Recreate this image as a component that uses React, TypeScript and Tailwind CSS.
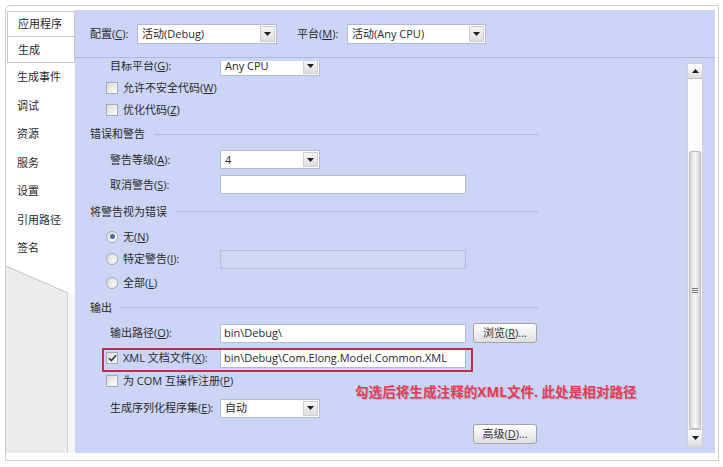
import React from "react";

function Arrow({ up }: { up?: boolean }) {
  return (
    <svg width="7" height="4" viewBox="0 0 7 4">
      <path d={up ? "M0 4 L3.5 0 L7 4Z" : "M0 0 L7 0 L3.5 4Z"} fill="#1f1f1f" />
    </svg>
  );
}

function Combo({ w, h, value }: { w: string; h: string; value: string }) {
  return (
    <div className={`flex ${w} ${h} border border-[#b3bad3] bg-white shrink-0`}>
      <div className="flex-1 flex items-center pl-[4px] whitespace-nowrap overflow-hidden">{value}</div>
      <div className="w-[15px] m-[1px] flex items-center justify-center border border-[#cfcfcf] bg-gradient-to-b from-[#f6f6f6] to-[#dedede]">
        <Arrow />
      </div>
    </div>
  );
}

function TextBox({ value, disabled }: { value?: string; disabled?: boolean }) {
  return (
    <div
      className={`w-[246px] h-[19px] shrink-0 flex items-center pl-[3px] border whitespace-nowrap ${
        disabled ? "border-[#b7bfe0] bg-[#cfd7f6]" : "border-[#b3bad3] bg-white"
      }`}
    >
      {value}
    </div>
  );
}

function Button({ children }: { children: React.ReactNode }) {
  return (
    <div className="w-[64px] h-[20px] shrink-0 flex items-center justify-center border border-[#a3a3a3] rounded-[3px] bg-gradient-to-b from-white to-[#e0e0e0] text-[#333]">
      {children}
    </div>
  );
}

function Check({ checked }: { checked?: boolean }) {
  return (
    <div className="w-[12px] h-[12px] shrink-0 border border-[#a4a9b6] bg-gradient-to-br from-[#dadada] to-white flex items-center justify-center">
      {checked && (
        <svg width="9" height="8" viewBox="0 0 9 8">
          <path d="M1 4.2 L3.4 6.6 L8 1.2" stroke="#2b3550" strokeWidth="1.6" fill="none" />
        </svg>
      )}
    </div>
  );
}

function Radio({ checked }: { checked?: boolean }) {
  return (
    <div className="w-[12px] h-[12px] shrink-0 rounded-full border border-[#a4a9b6] bg-gradient-to-br from-[#dadada] to-white flex items-center justify-center">
      {checked && <div className="w-[5px] h-[5px] rounded-full bg-[#4d6794]" />}
    </div>
  );
}

function Section({ title }: { title: string }) {
  return (
    <div className="flex items-center pl-[15px] w-[463px] h-full">
      <span className="whitespace-nowrap">{title}</span>
      <div className="ml-[9px] flex-1 border-t border-[#b3bbe2]" />
    </div>
  );
}

const tabsPlain = ["生成事件", "调试", "资源", "服务", "设置", "引用路径", "签名"];

export default function App() {
  return (
    <div className="w-[723px] h-[467px] bg-white pt-[5px] pl-[5px] overflow-hidden font-['Open_Sans','Noto_Sans_CJK_SC',sans-serif] text-[11px] leading-[14px] text-[#2a2a2a]">
      <div className="w-[714px] h-[456px] border border-[#cdcdcd] rounded-tl-[6px] rounded-tr-[2px] bg-white flex pt-[4px] pr-[2px] pb-[7px]">
        {/* left tab strip */}
        <div className="w-[69px] flex flex-col">
          <div className="bg-white flex flex-col">
            <div className="mt-[1px] ml-[1px] h-[26px] border border-[#c9c9c9] flex items-center pl-[10px]">应用程序</div>
            <div className="ml-[1px] h-[26px] border border-t-0 border-[#c9c9c9] flex items-center pl-[10px]">生成</div>
            {tabsPlain.map((t) => (
              <div key={t} className="h-[28.5px] flex items-center pl-[11px]">
                {t}
              </div>
            ))}
            <div className="h-[3px]" />
          </div>
          <svg width="69" height="28" viewBox="0 0 69 28" className="block">
            <rect x="0" y="0" width="69" height="28" fill="#ffffff" />
            <path d="M0 0 L62 27 L62 28 L0 28 Z" fill="#ececec" />
            <path d="M0 0 L62 27 L62 28" stroke="#c4c4c4" strokeWidth="1" fill="none" />
          </svg>
          <div className="flex-1 flex">
            <div className="w-[62px] bg-[#ececec] border-r border-[#d2d2d2]" />
            <div className="flex-1 bg-[#f6f6f6]" />
          </div>
        </div>

        {/* main panel */}
        <div className="w-[640px] h-[443px] bg-[#cdd5f6] flex flex-col">
          <div className="h-[48px] shrink-0 border-b border-[#aeb7df] flex items-center pl-[15px]">
            <span className="w-[47px] whitespace-nowrap">
              配置(<u>C</u>):
            </span>
            <Combo w="w-[140px]" h="h-[20px]" value="活动(Debug)" />
            <span className="ml-[20px] w-[50px] whitespace-nowrap">
              平台(<u>M</u>):
            </span>
            <Combo w="w-[139px]" h="h-[20px]" value="活动(Any CPU)" />
          </div>

          <div className="flex-1 flex min-h-0 pt-[3px]">
            <div className="flex-1 relative overflow-hidden">
              <div className="-mt-[6px] flex flex-col">
                <div className="h-[22px] flex items-center pl-[35px]">
                  <span className="w-[110px]">
                    目标平台(<u>G</u>):
                  </span>
                  <Combo w="w-[100px]" h="h-[19px]" value="Any CPU" />
                </div>
                <div className="h-[22px] flex items-center pl-[31px] gap-[5px]">
                  <Check />
                  <span>
                    允许不安全代码(<u>W</u>)
                  </span>
                </div>
                <div className="h-[22px] flex items-center pl-[31px] gap-[5px]">
                  <Check />
                  <span>
                    优化代码(<u>Z</u>)
                  </span>
                </div>
                <div className="h-[26px]">
                  <Section title="错误和警告" />
                </div>
                <div className="h-[25px] flex items-center pl-[35px]">
                  <span className="w-[110px]">
                    警告等级(<u>A</u>):
                  </span>
                  <Combo w="w-[100px]" h="h-[19px]" value="4" />
                </div>
                <div className="h-[25px] flex items-center pl-[35px]">
                  <span className="w-[110px]">
                    取消警告(<u>S</u>):
                  </span>
                  <TextBox />
                </div>
                <div className="h-[29px]">
                  <Section title="将警告视为错误" />
                </div>
                <div className="h-[21px] flex items-center pl-[31px] gap-[5px]">
                  <Radio checked />
                  <span>
                    无(<u>N</u>)
                  </span>
                </div>
                <div className="h-[24px] flex items-center pl-[31px]">
                  <Radio />
                  <span className="ml-[5px] w-[97px]">
                    特定警告(<u>I</u>):
                  </span>
                  <TextBox disabled />
                </div>
                <div className="h-[24px] flex items-center pl-[31px] gap-[5px]">
                  <Radio />
                  <span>
                    全部(<u>L</u>)
                  </span>
                </div>
                <div className="h-[25px]">
                  <Section title="输出" />
                </div>
                <div className="h-[26px] flex items-center pl-[35px]">
                  <span className="w-[110px]">
                    输出路径(<u>O</u>):
                  </span>
                  <TextBox value={"bin\\Debug\\"} />
                  <div className="ml-[7px]">
                    <Button>
                      浏览(<u>R</u>)...
                    </Button>
                  </div>
                </div>
                <div className="h-[24px] flex items-center pl-[31px]">
                  <Check checked />
                  <span className="ml-[5px] w-[97px] whitespace-nowrap">
                    XML 文档文件(<u>X</u>):
                  </span>
                  <TextBox value={"bin\\Debug\\Com.Elong.Model.Common.XML"} />
                </div>
                <div className="h-[22px] flex items-center pl-[31px] gap-[5px]">
                  <Check />
                  <span>
                    为 COM 互操作注册(<u>P</u>)
                  </span>
                </div>
                <div className="h-[32px] flex items-center pl-[35px]">
                  <span className="w-[110px] whitespace-nowrap">
                    生成序列化程序集(<u>E</u>):
                  </span>
                  <Combo w="w-[100px]" h="h-[19px]" value="自动" />
                </div>
                <div className="h-[20px] flex items-center pl-[398px]">
                  <Button>
                    高级(<u>D</u>)...
                  </Button>
                </div>
              </div>

              {/* annotation overlays */}
              <div className="absolute left-[27px] top-[287px] w-[371px] h-[24px] border-2 border-[#b8304c] pointer-events-none" />
              <div className="absolute left-[280px] top-[322px] whitespace-nowrap text-[13.6px] leading-[18px] font-bold text-[#e43c58] [text-shadow:1px_1px_1px_rgba(120,120,140,0.4)]">
                勾选后将生成注释的XML文件. 此处是相对路径
              </div>
            </div>

            {/* scrollbar */}
            <div className="w-[16px] mt-[2px] mb-[6px] mr-[12px] flex flex-col border border-[#d0d0d0] bg-[#f8f8f8]">
              <div className="h-[15px] flex items-center justify-center bg-gradient-to-b from-white to-[#dedede] border-b border-[#c4c4c4]">
                <Arrow up />
              </div>
              <div className="h-[72px] bg-[#fbfbfb]" />
              <div className="flex-1 mx-[1px] rounded-[2px] border border-[#bdbdbd] bg-gradient-to-r from-[#d6d6d6] via-[#f8f8f8] to-[#d6d6d6] flex flex-col items-center justify-center gap-[1px]">
                <div className="w-[6px] h-[1px] bg-[#777]" />
                <div className="w-[6px] h-[1px] bg-[#777]" />
                <div className="w-[6px] h-[1px] bg-[#777]" />
              </div>
              <div className="h-[17px] flex items-center justify-center bg-gradient-to-b from-white to-[#dedede] border-t border-[#c4c4c4]">
                <Arrow />
              </div>
            </div>
          </div>
        </div>
      </div>
    </div>
  );
}
